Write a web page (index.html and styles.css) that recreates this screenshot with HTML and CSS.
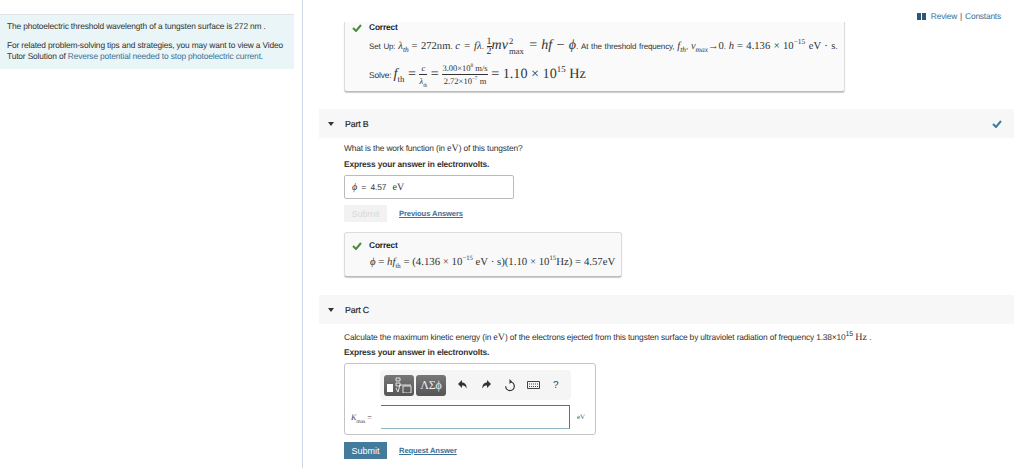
FILE: index.html
```html
<!DOCTYPE html>
<html lang="en">
<head>
<meta charset="utf-8">
<title>Part B and C</title>
<link rel="stylesheet" href="styles.css">
</head>
<body>
<div class="page">
  <aside class="side">
    <div class="intro">
      <p>The photoelectric threshold wavelength of a tungsten surface is 272 nm .</p>
      <p><span>For related problem-solving tips and strategies, you may want to view a Video</span><br><span>Tutor Solution of </span><a href="#">Reverse potential needed to stop photoelectric current</a>.</p>
    </div>
  </aside>
  <main class="main">
    <div class="top"><svg class="book" width="9" height="7" viewBox="0 0 9 7"><path d="M0 0h4v7H0zM5 0h4v7H5z"/></svg><a href="#">Review</a><span>|</span><a href="#">Constants</a></div>

    <section class="fb fb-a">
      <div class="fb-head"><svg class="tick" width="10" height="8" viewBox="0 0 10 8"><path d="M1 4l3 3 5-6" /></svg><b>Correct</b></div>
      <p class="setup">Set Up: <i class="m">λ<sub>th</sub></i> <span class="m">= 272nm</span>. <i class="m">c = fλ</i>. <span class="m big"><span class="frac small"><span>1</span><span>2</span></span><i>mv</i><span class="ss"><sup>2</sup><sub>max</sub></span> = <i>hf</i> − <i>ϕ</i></span>. At the threshold frequency, <i class="m">f<sub>th</sub></i>, <i class="m">v<sub>max</sub></i><span class="m">→0</span>. <i class="m">h</i> <span class="m">= 4.136 × 10<sup>−15</sup> eV · s</span>.</p>
      <p class="solve">Solve: <span class="m big"><i>f</i><sub>th</sub> = <span class="frac tiny"><span><i>c</i></span><span><i>λ</i><sub>th</sub></span></span> = <span class="frac tiny"><span>3.00×10<sup>8</sup> m/s</span><span>2.72×10<sup>−7</sup> m</span></span> = 1.10 × 10<sup>15</sup> Hz</span></p>
    </section>

    <section class="part part-b">
      <header class="bar"><span class="caret"></span><h2>Part B</h2><svg class="tick bar-tick" width="10" height="8" viewBox="0 0 10 8"><path d="M1 4l3 3 5-6" /></svg></header>
      <div class="body">
        <p class="q">What is the work function (in <span class="m">eV</span>) of this tungsten?</p>
        <p class="q"><b>Express your answer in electronvolts.</b></p>
        <div class="answer"><i class="m">ϕ</i> = &nbsp;4.57 &nbsp;<span class="m">eV</span></div>
        <div class="actions"><button class="btn off" type="button">Submit</button><a class="link" href="#">Previous Answers</a></div>
        <div class="fb fb-b">
          <div class="fb-head"><svg class="tick" width="10" height="8" viewBox="0 0 10 8"><path d="M1 4l3 3 5-6" /></svg><b>Correct</b></div>
          <p class="m eq"><i>ϕ</i> = <i>hf</i><sub>th</sub> = (4.136 × 10<sup>−15</sup> eV · s)(1.10 × 10<sup>15</sup>Hz) = 4.57eV</p>
        </div>
      </div>
    </section>

    <section class="part part-c">
      <header class="bar"><span class="caret"></span><h2>Part C</h2></header>
      <div class="body">
        <p class="q">Calculate the maximum kinetic energy (in <span class="m">eV</span>) of the electrons ejected from this tungsten surface by ultraviolet radiation of frequency 1.38×10<sup class="s15">15</sup> <span class="m">Hz</span> .</p>
        <p class="q"><b>Express your answer in electronvolts.</b></p>
        <div class="widget">
          <div class="toolbar">
            <span class="tool t1"><svg width="29" height="16" viewBox="0 0 29 16"><path fill="#fff" d="M2 7h6v8H2z"/><g fill="none" stroke="#fff" stroke-width=".8"><path d="M11 1h4v3h-4zM11 6h4v3h-4zM11 11l2 4 2-7h11M18 9h8v7h-8z"/></g></svg></span>
            <span class="tool t2">ΛΣϕ</span>
            <svg class="ico u" width="12" height="12" viewBox="0 0 12 12"><path d="M5 1L1 5l4 4V6.500c2 0 3.500.5 4.500 3C10 6 8 3.500 5 3.500z"/></svg>
            <svg class="ico r" width="12" height="12" viewBox="0 0 12 12"><path d="M7 1l4 4-4 4V6.500c-2 0-3.500.5-4.500 3C2 6 4 3.500 7 3.500z"/></svg>
            <svg class="ico o" width="12" height="13" viewBox="0 0 12 13"><path d="M6 3a4.300 4.300 0 1 1-4.300 4.300" fill="none" stroke="#333" stroke-width="1.200"/><path d="M5.500 0v5l2.500-2.500z"/></svg>
            <svg class="ico k" width="13" height="9" viewBox="0 0 13 9"><path fill="none" stroke="#444" d="M.5.500h12v7H.5z"/><path stroke="#444" stroke-dasharray="1 1" d="M2 3h9M2 5.500h9"/></svg>
            <span class="help">?</span>
          </div>
          <div class="entry">
            <span class="lbl"><i>K</i><sub>max</sub> =</span>
            <span class="field"></span>
            <span class="unit">eV</span>
          </div>
        </div>
        <div class="actions"><button class="btn" type="button">Submit</button><a class="link" href="#">Request Answer</a></div>
      </div>
    </section>
  </main>
</div>
</body>
</html>
```

FILE: styles.css
```css
* { box-sizing: border-box; }
html, body { margin: 0; height: 100%; overflow: hidden; background: #fff; }
body { font: 8.400px/11px "Liberation Sans", Arial, sans-serif; letter-spacing: -.15px; color: #333; text-rendering: geometricPrecision; }
p { margin: 0; }
a { color: #3a7199; text-decoration: none; }
.m { font-family: "Liberation Serif", serif; font-size: 10px; letter-spacing: 0; }
sub, sup { font-size: 70%; line-height: 0; }

.page { display: flex; height: 468px; }
.side { flex: 0 0 303px; border-right: 1px solid #cfd8e6; padding-top: 14px; }
.intro { width: 294px; height: 55px; padding: 6px 0 0 7px; background: #e9f5f6; border-top: 1px solid #dde3e6; }
.intro p + p { margin-top: 8px; }
.main { flex: 1; padding: 0 10px 0 16px; min-width: 0; }

.top { height: 22px; padding: 10px 13px 0 0; display: flex; justify-content: flex-end; align-items: center; gap: 3px; color: #446; font-size: 8.400px; letter-spacing: -.2px; }
.top .book { fill: #2f5675; margin-right: 2px; }

.fb { background: #f9f9f9; border: 1px solid #dcdcdc; border-bottom: 1px solid #bbb; border-radius: 3px; box-shadow: 0 1px 1px #ccc; }
.fb-a { margin-left: 25px; width: 501px; height: 70px; border-top: 0; background: #fafafa; padding: 0 0 0 7px; border-radius: 0 0 3px 3px; }
.fb-head { display: flex; align-items: center; gap: 7px; height: 11px; margin-top: 0; font-size: 8.400px; color: #222; }
.tick path { fill: none; stroke: #4f8a3c; stroke-width: 2; }
.setup { margin: 3px 0 0 17px; font-size: 8px; word-spacing: .8px; white-space: nowrap; line-height: 17px; height: 17px; display: block; }
.setup .m { font-size: 10.600px; }
.setup .m.big { font-size: 14px; }
.solve { margin: 9px 0 0 17px; white-space: nowrap; line-height: 20px; }
.solve .m.big { font-size: 14.200px; }
.big sub, .big sup, .eq sub, .eq sup { font-size: 62%; }
.frac { display: inline-flex; flex-direction: column; vertical-align: middle; text-align: center; line-height: 12px; }
.frac > span + span { border-top: 1px solid #333; }
.frac.tiny { font-size: 8.500px; }
.frac.small { font-size: 10px; line-height: 9px; }
.ss { display: inline-flex; flex-direction: column; vertical-align: middle; margin: 0 1px; font-size: 62%; line-height: 10px; }
.ss sup, .ss sub { font-size: 100%; line-height: 10px; }

.part-b { margin-top: 17px; }
.part-c { margin-top: 18px; }
.bar { display: flex; align-items: center; height: 29px; background: #f7f7f7; position: relative; }
.caret { width: 0; height: 0; margin-left: 9px; border: 3.500px solid transparent; border-top: 4px solid #333; border-bottom: 0; }
.bar h2 { margin: 1px 0 0 11px; font-size: 8.800px; font-weight: 400; color: #222; -webkit-text-stroke: .15px #222; }
.bar-tick { margin: 0 12px 0 auto; }
.bar-tick path { stroke: #3d7d9c; }

.body { padding-left: 25px; }
.q { margin-top: 5px; line-height: 11px; }
.part-c .q:first-child { margin-top: 8px; }
.q b, .fb-head b { font-weight: 700; }
.answer { width: 170px; height: 24px; margin-top: 5px; padding: 0 0 0 7px; display: flex; align-items: center; gap: 2px; border: 1px solid #bbb; border-radius: 2px; white-space: pre; }
.actions { display: flex; align-items: center; gap: 12px; margin-top: 6px; height: 17px; }
.btn { width: 43px; height: 17px; padding: 0; border: 0; background: #447b9d; color: #fff; font: 9px "Liberation Sans", sans-serif; }
.btn.off { background: #f2f2f2; color: #d9d9d9; }
.link { color: #3a7199; text-decoration: underline; font-size: 7.600px; font-weight: 700; letter-spacing: -.1px; }
.fb-b { width: 278px; height: 45px; margin-top: 10px; padding: 7px 0 0 7px; }
.eq { margin: 4px 0 0 18px; white-space: nowrap; font-size: 10.800px; line-height: 15px; }

.s15 { font-size: 7px; font-family: "Liberation Sans", sans-serif; }
.widget { width: 252px; height: 72px; margin-top: 5px; border: 1px solid #c4c4c4; border-radius: 3px; padding: 6px 0 0 35px; }
.part-c .q:nth-child(2) { margin-top: 4px; }
.toolbar { display: flex; align-items: center; width: 191px; height: 30px; padding-left: 4px; background: #f5f5f5; border-radius: 4px; }
.tool { display: flex; align-items: center; justify-content: center; height: 21px; width: 30px; border-radius: 3px; background: linear-gradient(#777, #555); color: #eee; margin-right: 2px; font: 12px "Liberation Serif", serif; }
.ico { margin-left: 11px; fill: #333; flex: none; }
.ico.u { margin-left: 9px; }
.ico.o { margin-left: 12px; }
.ico.k { margin-left: 11px; }
.help { margin-left: 13px; color: #444; font-size: 10px; }
.entry { display: flex; align-items: center; margin: 5px 0 0 -35px; }
.lbl { width: 36px; padding-left: 6px; font: 8px "Liberation Serif", serif; color: #444; white-space: nowrap; }
.field { width: 189px; height: 24px; border-top: 1px solid #3f7a9c; border-right: 1px solid #3f7a9c; border-bottom: 1px solid #8fb5c8; background: #fff; }
.unit { margin-left: 7px; font: 7px "Liberation Serif", serif; color: #555; }
.part-c .actions { margin-top: 7px; }
```
